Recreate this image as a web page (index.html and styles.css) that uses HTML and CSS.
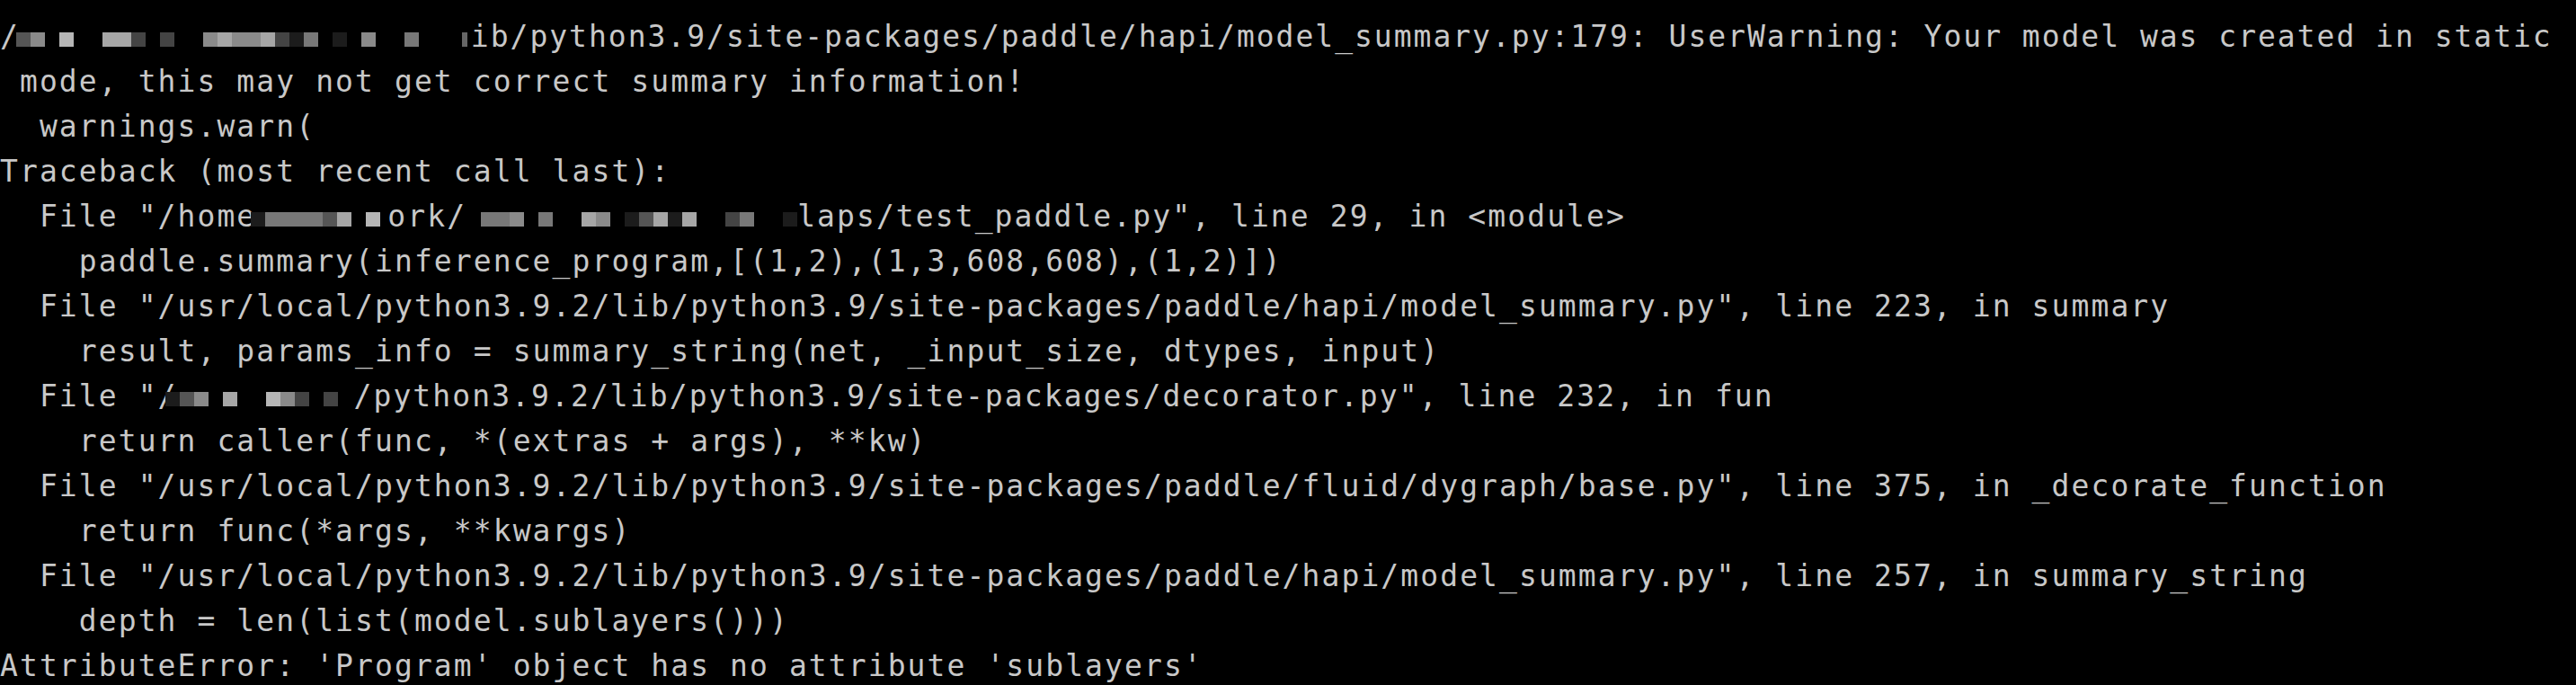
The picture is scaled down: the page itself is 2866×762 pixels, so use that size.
FILE: index.html
```html
<!DOCTYPE html>
<html>
<head>
<meta charset="utf-8">
<link rel="stylesheet" href="styles.css">
</head>
<body>
<div class="term">
<div class="ln">/<span class="mask m1"><i class="s3"></i><i class="s6"></i><i class="s0"></i><i class="s8"></i><i class="s0"></i><i class="s0"></i><i class="s7"></i><i class="s7"></i><i class="s2"></i><i class="s0"></i><i class="s2"></i><i class="s0"></i><i class="s0"></i><i class="s6"></i><i class="s7"></i><i class="s6"></i><i class="s6"></i><i class="s7"></i><i class="s2"></i><i class="s1"></i><i class="s5"></i><i class="s0"></i><i class="s1"></i><i class="s0"></i><i class="s6"></i><i class="s0"></i><i class="s0"></i><i class="s5"></i><i class="s0"></i><i class="s0"></i><i class="s0"></i><i class="s4"></i></span>ib/python3.9/site-packages/paddle/hapi/model_summary.py:179: UserWarning: Your model was created in static</div>
<div class="ln"> mode, this may not get correct summary information!</div>
<div class="ln">  warnings.warn(</div>
<div class="ln">Traceback (most recent call last):</div>
<div class="ln">  File "/home<span class="mask m2"><i class="s1"></i><i class="s5"></i><i class="s5"></i><i class="s5"></i><i class="s5"></i><i class="s3"></i><i class="s7"></i><i class="s0"></i><i class="s8"></i></span>ork/<span class="mask m3"><i class="s0"></i><i class="s5"></i><i class="s5"></i><i class="s6"></i><i class="s0"></i><i class="s5"></i><i class="s0"></i><i class="s0"></i><i class="s7"></i><i class="s6"></i><i class="s0"></i><i class="s1"></i><i class="s3"></i><i class="s7"></i><i class="s1"></i><i class="s7"></i><i class="s0"></i><i class="s0"></i><i class="s2"></i><i class="s5"></i><i class="s0"></i><i class="s0"></i><i class="s1"></i><i class="s0"></i></span>laps/test_paddle.py", line 29, in &lt;module&gt;</div>
<div class="ln">    paddle.summary(inference_program,[(1,2),(1,3,608,608),(1,2)])</div>
<div class="ln">  File "/usr/local/python3.9.2/lib/python3.9/site-packages/paddle/hapi/model_summary.py", line 223, in summary</div>
<div class="ln">    result, params_info = summary_string(net, _input_size, dtypes, input)</div>
<div class="ln">  File "/<span class="mask m4"><i class="s1"></i><i class="s3"></i><i class="s6"></i><i class="s0"></i><i class="s7"></i><i class="s0"></i><i class="s0"></i><i class="s8"></i><i class="s6"></i><i class="s2"></i><i class="s0"></i><i class="s2"></i><i class="s0"></i></span>/python3.9.2/lib/python3.9/site-packages/decorator.py", line 232, in fun</div>
<div class="ln">    return caller(func, *(extras + args), **kw)</div>
<div class="ln">  File "/usr/local/python3.9.2/lib/python3.9/site-packages/paddle/fluid/dygraph/base.py", line 375, in _decorate_function</div>
<div class="ln">    return func(*args, **kwargs)</div>
<div class="ln">  File "/usr/local/python3.9.2/lib/python3.9/site-packages/paddle/hapi/model_summary.py", line 257, in summary_string</div>
<div class="ln">    depth = len(list(model.sublayers()))</div>
<div class="ln">AttributeError: 'Program' object has no attribute 'sublayers'</div>
</div>
</body>
</html>
```
FILE: styles.css
```css
html, body {
  margin: 0;
  padding: 0;
  background: #000;
}
.term {
  padding: 16px 0 0 0;
  font-family: "DejaVu Sans Mono", monospace;
  font-size: 33px;
  letter-spacing: 2.08px;
  line-height: 50px;
  color: #c8c8c8;
}
.ln {
  height: 50px;
  white-space: pre;
}
.ln:first-child {
  letter-spacing: 1.98px;
}
.mask {
  display: inline-flex;
  overflow: hidden;
  height: 16px;
  margin-bottom: -1px;
  vertical-align: baseline;
}
.mask i {
  flex: 0 0 16px;
  height: 16px;
}
.m1 { width: 502px; margin-left: -4px; margin-right: 4px; }
.m2 { width: 150px; margin-left: -6px; margin-right: 2px; }
.m3 { width: 370px; margin-right: -2px; }
.m4 { width: 196px; margin-left: -14px; margin-right: 14px; }
.s0 { background: #000; }
.s1 { background: #1c1c1c; }
.s2 { background: #444; }
.s3 { background: #555; }
.s4 { background: #666; }
.s5 { background: #787878; }
.s6 { background: #8a8a8a; }
.s7 { background: #a6a6a6; }
.s8 { background: #b6b6b6; }
```
